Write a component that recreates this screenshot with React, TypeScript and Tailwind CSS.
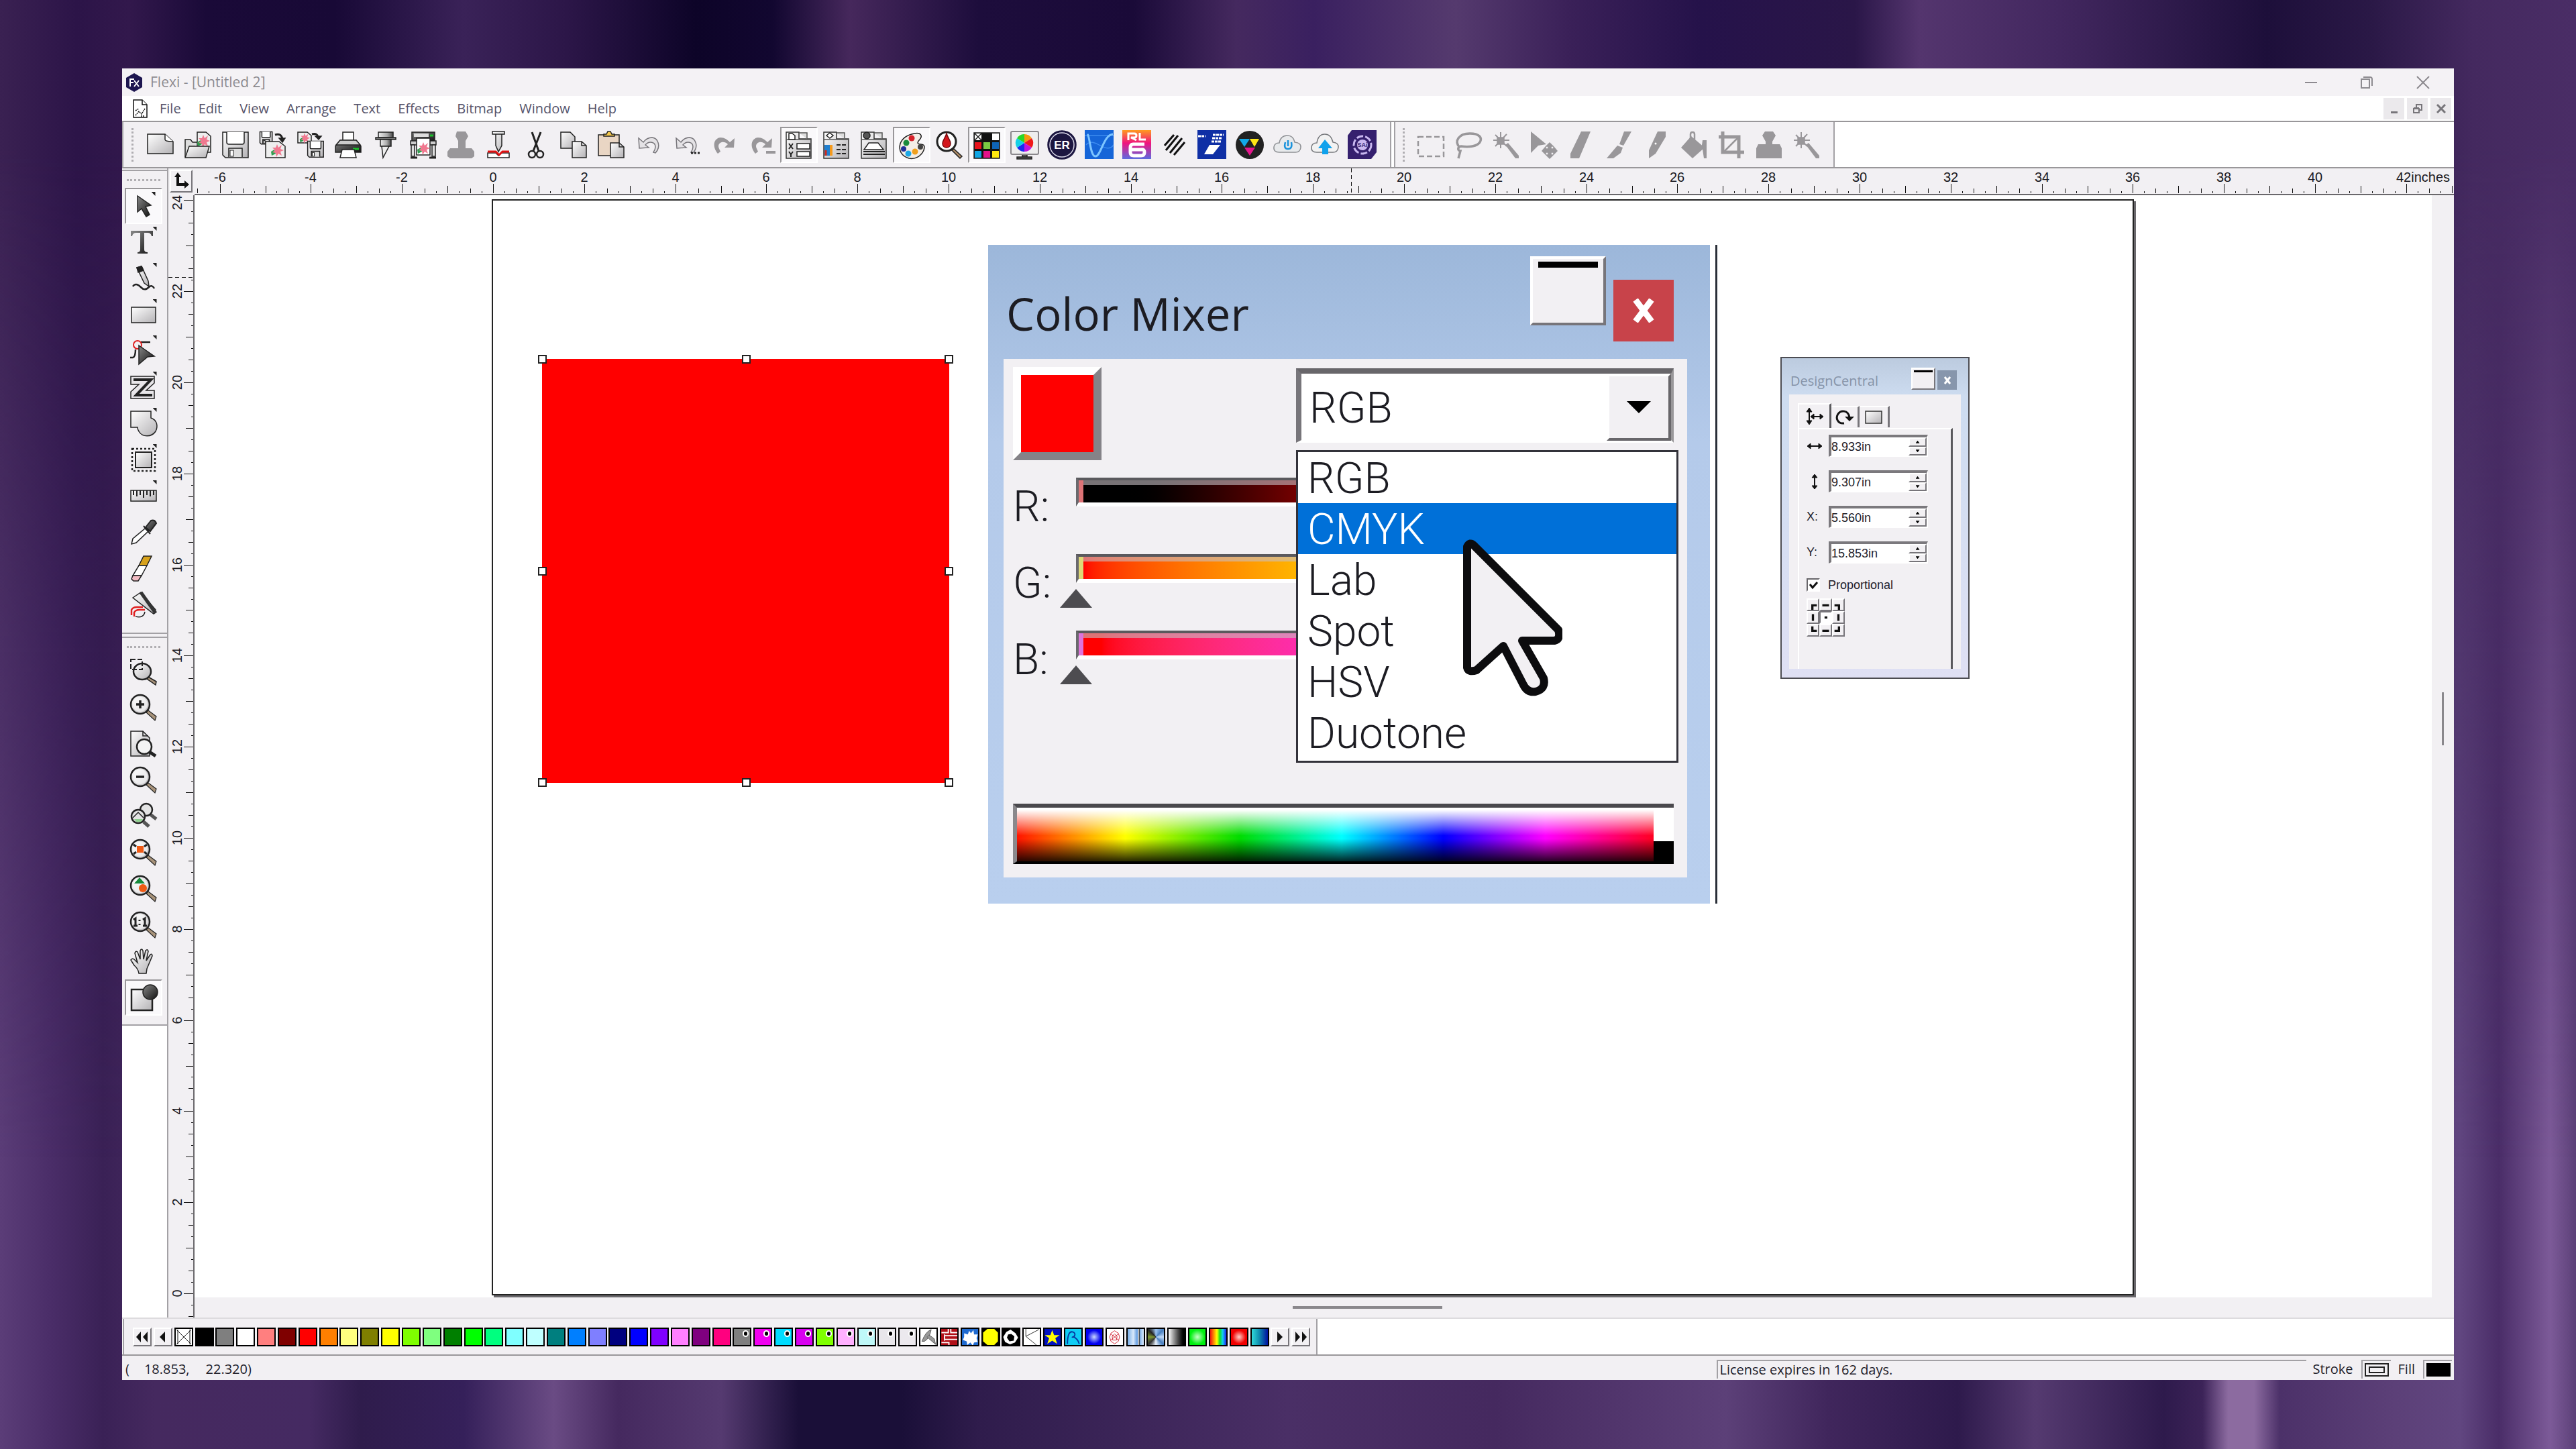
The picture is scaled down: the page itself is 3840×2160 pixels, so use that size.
import React, { useState } from "react";
import clsx from "clsx";

interface Tool {
  name: string;
  icon: React.ReactNode;
  pressed?: boolean;
  flyout?: boolean;
}

const INCH = 68;
const ORIGIN_X = 445;
const ORIGIN_Y = 1637;

const raised =
  "border-2 border-t-white border-l-white border-r-[#77757a] border-b-[#77757a] bg-[#f2f0f3]";
const sunken =
  "border-t-4 border-l-4 border-r-2 border-b-2 border-t-[#7b797d] border-l-[#7b797d] border-r-white border-b-white";

const Glyph: React.FC<{ children: React.ReactNode; className?: string }> = ({
  children,
  className = "size-10",
}) => (
  <svg
    viewBox="0 0 40 40"
    className={clsx("shrink-0 overflow-visible", className)}
    fill="none"
    stroke="#222"
    strokeWidth="1.5"
    aria-hidden="true"
  >
    {children}
  </svg>
);

const Defs = () => (
  <svg className="absolute size-0" aria-hidden="true">
    <defs>
      <linearGradient id="metal" x1="0" y1="0" x2="1" y2="1">
        <stop offset="0" stopColor="#fff" />
        <stop offset="1" stopColor="#b4b2b5" />
      </linearGradient>
      <linearGradient id="dark" x1="0" y1="0" x2="1" y2="1">
        <stop offset="0" stopColor="#888" />
        <stop offset="1" stopColor="#111" />
      </linearGradient>
      <linearGradient id="bar" x1="0" y1="0" x2="1" y2="0">
        <stop offset="0" stopColor="#eee" />
        <stop offset="0.6" stopColor="#aaa" />
        <stop offset="1" stopColor="#444" />
      </linearGradient>
      <linearGradient id="sunset" x1="0" y1="0" x2="0" y2="1">
        <stop offset="0" stopColor="#ff9a1f" />
        <stop offset="0.45" stopColor="#f0127f" />
        <stop offset="1" stopColor="#5d6be0" />
      </linearGradient>
    </defs>
  </svg>
);

const Flower: React.FC<{ x: number; y: number; s?: number }> = ({ x, y, s = 1 }) => (
  <g transform={`translate(${x} ${y}) scale(${s})`} stroke="none">
    <path d="M-9 3l5-3 2 6-6 3z" fill="#2f9e4f" />
    <path
      d="M0-8l2 5 5-4-2 6 5 2-5 2 2 6-5-3-3 5-1-6-5-1 4-3-4-4 5 0z"
      fill="#f0788f"
    />
  </g>
);

const Floppy: React.FC<{ x: number; y: number; s: number }> = ({ x, y, s }) => (
  <g transform={`translate(${x} ${y}) scale(${s})`}>
    <path d="M1 1h38v38H5l-4-4z" fill="url(#metal)" strokeWidth={1.5 / s} />
    <path d="M7 1v15q0 3 3 3h20q3 0 3-3V1" fill="#fff" strokeWidth={1.5 / s} />
    <path d="M10 38V25h20v13" fill="#ddd" strokeWidth={1.5 / s} />
    <rect x="12" y="28" width="5" height="9" fill="#fff" strokeWidth={1 / s} />
  </g>
);

const wand = (
  <g fill="#99979a" stroke="#99979a">
    <path d="M19 20l4-3 16 19v4h-5z" stroke="none" />
    <path d="M12 1v24M1 13h24M4 5l17 17M21 4L4 22" strokeWidth="2" />
    <path d="M7 9h10v10H7z" />
  </g>
);

const undo = (
  <path
    d="M5 10l1 15 14-1-5-4c6-7 15-4 15 3 0 3-1 5-3 8l3 1c9-10 4-22-5-23-6 0-10 3-13 7z"
    fill="#e4e2e5"
    stroke="#77757a"
  />
);

const redo = (
  <path
    d="M36 10l-1 14H21l5-5c-6-6-14-3-14 3 0 3 2 5 3 8l-4 3C2 22 5 10 15 9c6 0 10 3 14 7z"
    fill="#99979a"
    stroke="none"
  />
);

const panelBack = (
  <>
    <path d="M1 1h19v10h18v29H1z" fill="url(#metal)" stroke="#333" />
    <path d="M20 2h12v9" fill="#ddd" stroke="#555" />
    <path d="M1 12h37" stroke="#555" />
  </>
);

const fileTools: Tool[] = [
  {
    name: "New",
    icon: (
      <Glyph>
        <path d="M1 4h26l12 11v18H1z" fill="url(#metal)" />
        <path d="M27 4v8q0 3 12 3" fill="#fff" />
      </Glyph>
    ),
  },
  {
    name: "Open",
    icon: (
      <Glyph>
        <path d="M1 38V12h8l3 4h8" fill="#ddd" />
        <path d="M19 1h13l7 6v24H19z" fill="#eee" />
        <Flower x={28} y={13} />
        <path d="M1 39l6-17h30l-5 17z" fill="url(#metal)" />
      </Glyph>
    ),
  },
  { name: "Save", icon: <Glyph><Floppy x={0} y={0} s={1} /></Glyph> },
  {
    name: "Import",
    icon: (
      <Glyph>
        <Floppy x={0} y={0} s={0.48} />
        <path d="M9 15h20l9 7v17H9z" fill="#eee" />
        <Flower x={26} y={27} />
        <path d="M23 5q9-3 11 6" strokeWidth="3" />
        <path d="M29 10h9l-4 6z" fill="#222" />
      </Glyph>
    ),
  },
  {
    name: "Export",
    icon: (
      <Glyph>
        <path d="M1 1h14l6 5v11H1z" fill="#eee" />
        <Flower x={11} y={9} s={0.8} />
        <Floppy x={15} y={14} s={0.62} />
        <path d="M22 4q8-2 9 4" strokeWidth="3" />
        <path d="M27 7h9l-4 5z" fill="#222" />
      </Glyph>
    ),
  },
  {
    name: "Print",
    icon: (
      <Glyph>
        <path d="M12 14V1h16v13" fill="#fff" />
        <path d="M1 22l7-9h24l7 9v9H1z" fill="url(#dark)" />
        <path d="M2 20l6-7h24l6 7z" fill="#ccc" />
        <path d="M27 26h9" stroke="#19c22a" strokeWidth="3" />
        <path d="M11 27h18l3 12H8z" fill="#fff" />
      </Glyph>
    ),
  },
  {
    name: "Cut/Plot",
    icon: (
      <Glyph>
        <path d="M9 1h22v8H9z" fill="url(#bar)" />
        <path d="M5 9h30v3H5z" fill="#777" />
        <path d="M12 12h16v10H12z" fill="url(#bar)" />
        <path d="M14 22h11l-9 17z" fill="#eee" />
      </Glyph>
    ),
  },
  {
    name: "RIP and Print",
    icon: (
      <Glyph>
        <path d="M3 1h34v14H3z" fill="url(#dark)" />
        <path d="M6 3h22v5H6z" fill="#ddd" stroke="none" />
        <path d="M30 6h5" stroke="#19c22a" strokeWidth="3" />
        <path d="M1 14h38v6H1z" fill="#ccc" />
        <path d="M2 20h5v17H2zM33 20h5v17h-5z" fill="#ddd" />
        <path d="M10 10h20v25H10z" fill="#fff" />
        <Flower x={20} y={24} />
        <path d="M1 39h10M29 39h10" strokeWidth="3" />
      </Glyph>
    ),
  },
  {
    name: "Stamp",
    icon: (
      <Glyph>
        <path
          d="M14 0h13l4 7-4 7v11h9l4 5v7l-4 3H4l-4-3v-7l4-5h12V14l-4-7z"
          fill="#99979a"
          stroke="none"
        />
      </Glyph>
    ),
  },
  {
    name: "Cut contour",
    icon: (
      <Glyph>
        <path d="M11 0h18v4H11zM16 4h9v17l-5 9-4-9z" fill="url(#metal)" />
        <path d="M4 32v7h32v-7l-12 0-4 4-4-4z" fill="#fff" />
        <path d="M4 30h12l5 5 5-5h10" stroke="#e01010" strokeWidth="3" />
      </Glyph>
    ),
  },
  {
    name: "Cut",
    icon: (
      <Glyph>
        <path d="M14 1l10 28M27 1L16 29" strokeWidth="3" />
        <ellipse cx="14" cy="34" rx="5" ry="5" strokeWidth="2.5" />
        <ellipse cx="26" cy="34" rx="5" ry="5" strokeWidth="2.5" />
      </Glyph>
    ),
  },
  {
    name: "Copy",
    icon: (
      <Glyph>
        <path d="M1 1h14l7 7v17H1z" fill="url(#metal)" />
        <path d="M18 15h14l7 6v18H18z" fill="url(#metal)" />
        <path d="M32 15v6h7" />
      </Glyph>
    ),
  },
  {
    name: "Paste",
    icon: (
      <Glyph>
        <path d="M1 5h31v31H1z" fill="#e9d6c4" />
        <path d="M9 7V4h4l2-4h4l2 4h4v3z" fill="#f5c84c" />
        <path d="M19 17h13l7 6v16H19z" fill="url(#metal)" />
        <path d="M32 17v6h7" />
      </Glyph>
    ),
  },
  { name: "Undo", icon: <Glyph>{undo}</Glyph> },
  {
    name: "Undo list",
    icon: (
      <Glyph>
        {undo}
        <path d="M27 32h14" strokeWidth="3" strokeDasharray="3 2" />
      </Glyph>
    ),
  },
  { name: "Redo", icon: <Glyph>{redo}</Glyph> },
  {
    name: "Redo list",
    icon: (
      <Glyph>
        {redo}
        <path d="M27 31h14" stroke="#99979a" strokeWidth="4" />
      </Glyph>
    ),
  },
  {
    name: "DesignCentral",
    pressed: true,
    icon: (
      <Glyph>
        {panelBack}
        <path d="M5 3h5l4 3v6H5zM17 18h19v8H17zM17 30h19v7H17z" fill="#fff" />
        <path d="M5 18l6 8M11 18l-6 8M5 30l3 4 3-4M8 34v4" strokeWidth="2" />
      </Glyph>
    ),
  },
  {
    name: "DesignEditor",
    icon: (
      <Glyph>
        {panelBack}
        <path d="M5 6l5-4 5 4-5 4z" fill="#fff" />
        <path d="M4 36V20M8 36V20" stroke="#1f7fd0" strokeWidth="4" />
        <path d="M12 36V20" stroke="#f59a1c" strokeWidth="4" />
        <path d="M4 36V28" stroke="#d02a1c" strokeWidth="3" />
        <path d="M20 20h16M20 27h16M20 33h16" strokeWidth="2" strokeDasharray="6 2" />
      </Glyph>
    ),
  },
  {
    name: "Layers",
    icon: (
      <Glyph>
        {panelBack}
        <circle cx="9" cy="6" r="5" fill="#555" />
        <path d="M12 17h14l8 10H5z" fill="#fff" />
        <path d="M4 30h32M4 34h32" strokeWidth="2" />
      </Glyph>
    ),
  },
  {
    name: "Fill/Stroke Editor",
    pressed: true,
    icon: (
      <Glyph>
        <path
          d="M24 3c9-2 13 3 8 9-4 4-4 7 1 7 6 0 7 3 5 9-4 9-13 14-22 12C5 37 0 28 3 18 6 10 14 5 24 3z"
          fill="#f3ede7"
        />
        <g stroke="none">
          <circle cx="20" cy="10" r="4.500" fill="#d6212a" />
          <circle cx="12" cy="17" r="4.500" fill="#1b8a3c" />
          <circle cx="8" cy="26" r="4" fill="#22309a" />
          <circle cx="15" cy="33" r="4.500" fill="#1ba7e6" />
          <circle cx="25" cy="30" r="4.500" fill="#f0a01e" />
          <circle cx="33" cy="23" r="4" fill="#444" />
        </g>
      </Glyph>
    ),
  },
  {
    name: "Find color",
    icon: (
      <Glyph>
        <path d="M27 26l12 11-3 3-12-12z" fill="#b08c66" />
        <circle cx="16" cy="15" r="14" fill="#fff" strokeWidth="3" />
        <path d="M16 3c2 7 6 10 6 15 0 8-12 8-12 0 0-5 4-8 6-15z" fill="#d3161c" stroke="#7a0a0e" />
      </Glyph>
    ),
  },
  {
    name: "Swatches",
    pressed: true,
    icon: (
      <Glyph>
        <path d="M1 2h38v38H1z" fill="#111" />
        <g stroke="none">
          <path d="M2 3h10v10H2zM28 3h10v10H28z" fill="#fff" />
          <path d="M2 16h10v10H2z" fill="#e8131c" />
          <path d="M15 16h10v10H15z" fill="#7ac943" />
          <path d="M28 16h10v10H28z" fill="#0f63b5" />
          <path d="M2 29h10v10H2z" fill="#0fa5e3" />
          <path d="M15 29h10v10H15z" fill="#e3128a" />
          <path d="M28 29h10v10H28z" fill="#ffe80f" />
        </g>
        <path d="M2 3l10 10M12 3L2 13" />
      </Glyph>
    ),
  },
  {
    name: "Color Mixer",
    icon: (
      <Glyph>
        <path d="M17 34h7v4h-7zM9 38h22v3H9z" fill="#555" />
        <rect x="0" y="0" width="41" height="34" rx="2" fill="#eee" stroke="#8a888c" strokeWidth="2" />
        <g stroke="none">
          <path d="M20 17L20 4A13 13 0 0 1 31 10z" fill="#f59a0c" />
          <path d="M20 17L31 10A13 13 0 0 1 31 24z" fill="#f01818" />
          <path d="M20 17L31 24A13 13 0 0 1 20 30z" fill="#c012e0" />
          <path d="M20 17L20 30A13 13 0 0 1 9 24z" fill="#1a2bf0" />
          <path d="M20 17L9 24A13 13 0 0 1 9 10z" fill="#14d0e6" />
          <path d="M20 17L9 10A13 13 0 0 1 20 4z" fill="#28d828" />
        </g>
      </Glyph>
    ),
  },
  {
    name: "EnRoute",
    icon: (
      <Glyph>
        <circle cx="20" cy="20" r="21" fill="#1c1640" stroke="#1c1640" />
        <circle cx="20" cy="20" r="18" stroke="#d8d6e6" />
        <text x="20" y="26" textAnchor="middle" fill="#fff" stroke="none" fontSize="17" fontWeight="700" fontFamily="Liberation Sans, sans-serif">
          ER
        </text>
      </Glyph>
    ),
  },
  {
    name: "Vectorize",
    icon: (
      <Glyph>
        <path d="M-2-2h43v43H-2z" fill="#1565d8" stroke="none" />
        <path d="M-2 6h43M0 20c12-14 30 16 41 0" stroke="#3d8cf0" />
        <path d="M2 4c4 4 4 33 12 33S26 5 40 4" stroke="#7cc4ff" strokeWidth="3" />
      </Glyph>
    ),
  },
  {
    name: "RIP Log",
    icon: (
      <Glyph>
        <path d="M-2-2h43v43H-2z" fill="url(#sunset)" stroke="none" />
        <path d="M7 13V3h9q3 0 3 3t-3 3h-5l8 4M24 2v10h9" stroke="#fff" strokeWidth="3" />
        <path d="M31 19H14q-4 0-4 5v7q0 5 5 5h11q5 0 5-5t-5-4H10" stroke="#fff" strokeWidth="5" />
      </Glyph>
    ),
  },
  {
    name: "Hatching",
    icon: (
      <Glyph>
        <path d="M5 21l14-16M7 28L25 6M13 32L31 10M19 35l16-19" strokeWidth="3" stroke="#111" />
      </Glyph>
    ),
  },
  {
    name: "Production",
    icon: (
      <Glyph>
        <path d="M-2-2h43v43H-2z" fill="#0f2fa5" stroke="none" />
        <path d="M-1 7h11M21 5h16M20 10h15M19 15h15" stroke="#fff" strokeWidth="3" strokeDasharray="4 1" />
        <path d="M16 20h16L21 34H8z" fill="#fff" stroke="none" />
      </Glyph>
    ),
  },
  {
    name: "CMYK test",
    icon: (
      <Glyph>
        <circle cx="20" cy="20" r="21" fill="#222" stroke="none" />
        <g stroke="none">
          <path d="M4 11h16l-8 12z" fill="#11a9e8" />
          <path d="M20 11h14l-7 12z" fill="#ffe615" />
          <path d="M12 24h16l-8 12z" fill="#e5168c" />
        </g>
      </Glyph>
    ),
  },
  {
    name: "Cloud status",
    icon: (
      <Glyph>
        <path
          d="M8 31q-9 0-8-8 1-6 8-6 2-11 12-11 9 0 11 10 10 1 9 8-1 7-8 7z"
          fill="#e8eaec"
          stroke="#8e9094"
        />
        <path d="M21 13v9M17 16q-3 10 4 10t5-10" stroke="#1a93dc" strokeWidth="2.500" />
      </Glyph>
    ),
  },
  {
    name: "Cloud upload",
    icon: (
      <Glyph>
        <path
          d="M8 31q-9 0-8-8 1-6 8-6 2-13 12-13 9 0 12 12 9 1 8 8-1 7-8 7z"
          fill="#f2f2f2"
          stroke="#77797d"
        />
        <path d="M20 12l11 13h-6v9h-9v-9h-6z" fill="#0fa1ec" stroke="none" />
      </Glyph>
    ),
  },
  {
    name: "SAi Connect",
    icon: (
      <Glyph>
        <path d="M4-2h37v33l-8 10H-2V6z" fill="#35206e" stroke="none" />
        <circle cx="20" cy="20" r="13" stroke="#c9b8f0" strokeWidth="3" strokeDasharray="10 3" />
        <circle cx="20" cy="20" r="8" fill="#c9b8f0" stroke="none" />
        <text x="20" y="23" textAnchor="middle" fill="#35206e" stroke="none" fontSize="9" fontWeight="700" fontFamily="Liberation Sans, sans-serif">
          SAi
        </text>
      </Glyph>
    ),
  },
];

const bitmapTools: Tool[] = [
  {
    name: "Marquee",
    icon: (
      <Glyph>
        <path d="M1 8h38v29H1z" stroke="#99979a" strokeWidth="2.500" strokeDasharray="8 4" />
      </Glyph>
    ),
  },
  {
    name: "Lasso",
    icon: (
      <Glyph>
        <path
          d="M7 24C-2 14 6 3 22 3c14 0 19 6 15 13-4 6-16 8-28 6-6 1-5 7-1 7l-3 11"
          stroke="#99979a"
          strokeWidth="3.500"
        />
      </Glyph>
    ),
  },
  { name: "Magic wand", icon: <Glyph>{wand}</Glyph> },
  {
    name: "Move selection",
    icon: (
      <Glyph>
        <path d="M1 0l23 19-12 2-11 11z" fill="#99979a" stroke="none" />
        <path
          d="M29 17l5 5h-3v4h4v-3l5 6-5 5v-3h-4v4h3l-5 5-5-5h3v-4h-4v3l-5-5 5-6v3h4v-4h-3z"
          fill="#99979a"
          stroke="#99979a"
        />
      </Glyph>
    ),
  },
  {
    name: "Line",
    icon: <Glyph><path d="M20 0h14L17 40H4v-7z" fill="#99979a" stroke="none" /></Glyph>,
  },
  {
    name: "Brush",
    icon: (
      <Glyph>
        <path d="M28 0h11L27 21l-6-2zM18 21l8 3-3 8-11 8H2z" fill="#99979a" stroke="none" />
      </Glyph>
    ),
  },
  {
    name: "Pencil",
    icon: (
      <Glyph>
        <path d="M22 0h12v8L19 33 9 40V28z" fill="#99979a" stroke="none" />
        <circle cx="19" cy="18" r="1.500" fill="#fff" stroke="none" />
      </Glyph>
    ),
  },
  {
    name: "Fill",
    icon: (
      <Glyph>
        <path d="M16 7l20 17-18 16L1 24zM33 13h6v27h-4l-3-20z" fill="#99979a" stroke="none" />
        <path d="M15 14V4q0-3 3-3t3 3v8" stroke="#99979a" strokeWidth="2.500" />
      </Glyph>
    ),
  },
  {
    name: "Crop",
    icon: (
      <Glyph>
        <path d="M7 0v31h32M1 8h30v32" stroke="#99979a" strokeWidth="5" />
        <path d="M9 30L30 9" stroke="#99979a" strokeWidth="2.500" />
      </Glyph>
    ),
  },
  {
    name: "Clone stamp",
    icon: (
      <Glyph>
        <path d="M14 0h12l4 6-5 9v4h11l3 6v15H1V25l3-6h11v-4l-5-9z" fill="#99979a" stroke="none" />
      </Glyph>
    ),
  },
  { name: "Retouch", icon: <Glyph>{wand}</Glyph> },
];

const magnifier = (
  <>
    <path d="M27 24l12 9-2 6-13-12z" fill="#a8937a" strokeWidth="1.200" />
    <circle cx="15" cy="15" r="14" fill="url(#metal)" strokeWidth="2.500" />
    <circle cx="15" cy="15" r="11" fill="#fff" stroke="none" opacity="0.6" />
  </>
);

const drawTools: Tool[] = [
  {
    name: "Select",
    pressed: true,
    flyout: true,
    icon: (
      <Glyph>
        <path d="M11 5l20 14-8 2 6 12-5 3-7-12-6 5z" fill="url(#dark)" />
      </Glyph>
    ),
  },
  {
    name: "Text",
    flyout: true,
    icon: (
      <Glyph>
        <path d="M1 3h33v8h-2q-1-5-6-5h-5v25q0 4 5 4v2H11v-2q4 0 4-4V6H9q-5 0-6 5H1z" fill="url(#dark)" stroke="none" />
      </Glyph>
    ),
  },
  {
    name: "Freehand",
    flyout: true,
    icon: (
      <Glyph>
        <path d="M10 4l7-2 10 22 1 8-7-5z" fill="url(#metal)" />
        <path d="M10 4l7-2 3 6-8 3z" fill="#222" />
        <path d="M4 32c4-6 9-2 13 2s8 2 11-1 6-2 8 2" strokeWidth="2.500" />
      </Glyph>
    ),
  },
  {
    name: "Rectangle",
    flyout: true,
    icon: <Glyph><path d="M2 9h36v23H2z" fill="url(#metal)" /></Glyph>,
  },
  {
    name: "Path edit",
    flyout: true,
    icon: (
      <Glyph>
        <path d="M0 30h4q4-1 4-12M16 7h14" strokeWidth="2.500" />
        <circle cx="11" cy="11" r="6" stroke="#e02020" strokeWidth="2" />
        <path d="M13 12l23 16-10 1-13 11z" fill="url(#dark)" />
      </Glyph>
    ),
  },
  {
    name: "Outline",
    flyout: true,
    icon: (
      <Glyph>
        <path d="M1 4h35v10L24 25h12v12H1V27l12-11H1z" fill="#e8e6e9" />
        <path d="M5 9h26L9 32h24" strokeWidth="4" />
      </Glyph>
    ),
  },
  {
    name: "Weld",
    flyout: true,
    icon: (
      <Glyph>
        <path d="M1 2h30v10c9 3 11 12 7 20-6 9-20 9-25 0-2-3-2-4-2-6H1z" fill="url(#metal)" />
      </Glyph>
    ),
  },
  {
    name: "Contour",
    flyout: true,
    icon: (
      <Glyph>
        <path d="M3 4h34v33H3z" strokeDasharray="3 3" strokeWidth="2.500" />
        <path d="M8 9h24v23H8z" fill="url(#metal)" strokeWidth="2" />
      </Glyph>
    ),
  },
  {
    name: "Measure",
    flyout: true,
    icon: (
      <Glyph>
        <path d="M1 12h38v16H1z" fill="url(#metal)" />
        <path d="M5 12v7M10 12v9M15 12v7M20 12v11M25 12v7M30 12v9M35 12v7" strokeWidth="2" />
      </Glyph>
    ),
  },
  {
    name: "Eyedropper",
    icon: (
      <Glyph>
        <path d="M2 38l2-8 18-15 5 4L9 36z" fill="#fff" />
        <path d="M20 11l10 12M23 13l8-10q6-2 8 4l-9 12z" fill="url(#dark)" strokeWidth="2" />
      </Glyph>
    ),
  },
  {
    name: "Eraser",
    icon: (
      <Glyph>
        <path d="M20 2h12l-7 14H13z" fill="#d8a21c" />
        <path d="M13 16h12l-8 15H4z" fill="#fff" />
        <path d="M4 31h13l-5 8H5l-3-3z" fill="#f3bcc4" />
      </Glyph>
    ),
  },
  {
    name: "Knife",
    icon: (
      <Glyph>
        <path d="M4 10l12-8 22 26-3 6z" fill="url(#metal)" />
        <path d="M16 2l22 31" strokeWidth="5" stroke="#333" />
        <path d="M2 36v-8q2-4 8-4h9M6 38v-6q2-4 8-4h8" stroke="#e02020" strokeWidth="2.500" />
        <path d="M8 38q12 3 14-7" />
      </Glyph>
    ),
  },
];

const zoomTools: Tool[] = [
  {
    name: "Zoom area",
    icon: (
      <Glyph>
        <path d="M27 28l12 7-1 5-13-9z" fill="#a8937a" />
        <ellipse cx="18" cy="20" rx="13" ry="12" fill="url(#metal)" strokeWidth="2.500" />
        <path d="M1 2h17v15H1z" strokeWidth="2" strokeDasharray="7 3" />
      </Glyph>
    ),
  },
  {
    name: "Zoom in",
    icon: <Glyph>{magnifier}<path d="M15 9v12M9 15h12" strokeWidth="3.500" /></Glyph>,
  },
  {
    name: "Zoom to page",
    icon: (
      <Glyph>
        <path d="M1 1h18l10 10v27H1z" fill="url(#metal)" />
        <path d="M19 1v7h8" />
        <path d="M29 32l9 6" strokeWidth="5" />
        <circle cx="21" cy="24" r="11" fill="#f4f4f4" strokeWidth="2.500" />
      </Glyph>
    ),
  },
  {
    name: "Zoom out",
    icon: <Glyph>{magnifier}<path d="M9 15h12" strokeWidth="3.500" /></Glyph>,
  },
  {
    name: "Zoom previous",
    icon: (
      <Glyph>
        <path d="M30 17l9 7M20 28l8 7" strokeWidth="5" stroke="#555" />
        <circle cx="24" cy="10" r="9" fill="#e4e4e4" strokeWidth="2.500" />
        <circle cx="12" cy="20" r="10" fill="#e4e4e4" strokeWidth="2.500" />
        <path d="M4 22l8-8 8 8" />
        <path d="M6 24h13l-3 4H9z" fill="#8fd08f" stroke="none" />
      </Glyph>
    ),
  },
  {
    name: "Zoom to selection",
    icon: (
      <Glyph>
        {magnifier}
        <path d="M10 10h10v10H10z" fill="#f05a14" stroke="none" />
        <path d="M5 8l4 3M25 8l-4 3M5 22l4-3M25 22l-4-3" strokeWidth="3" />
      </Glyph>
    ),
  },
  {
    name: "Zoom to objects",
    icon: (
      <Glyph>
        {magnifier}
        <path d="M14 3l8 9H6z" fill="#168a3a" stroke="none" />
        <circle cx="19" cy="19" r="6" fill="#f05a14" stroke="none" />
      </Glyph>
    ),
  },
  {
    name: "Actual size",
    icon: (
      <Glyph>
        {magnifier}
        <path d="M5 12l3-2v11M14 12v2M14 18v2M19 12l3-2v11M5 21h6M19 21h6" strokeWidth="3" />
      </Glyph>
    ),
  },
  {
    name: "Pan",
    icon: (
      <Glyph>
        <path
          d="M13 38q-1-7-7-12l-5-8q2-3 5-1l5 5L7 8q1-4 4-2l4 11V4q2-4 4 0l1 13 3-13q3-3 4 1l-3 14 6-9q3-2 3 2-5 12-8 19l-1 7z"
          fill="url(#metal)"
        />
      </Glyph>
    ),
  },
  {
    name: "Fill and stroke",
    pressed: true,
    icon: (
      <Glyph>
        <path d="M2 8h31v31H2z" fill="url(#metal)" strokeWidth="2.500" />
        <circle cx="30" cy="12" r="11" fill="url(#dark)" />
      </Glyph>
    ),
  },
];

const ToolButton: React.FC<{ tool: Tool }> = ({ tool }) => (
  <button
    type="button"
    aria-label={tool.name}
    className={clsx(
      "relative flex h-[54px] w-[56px] shrink-0 items-center justify-center",
      tool.pressed &&
        "border-2 border-t-[#99979a] border-l-[#99979a] border-r-white border-b-white bg-[#faf9fb]",
    )}
  >
    {tool.icon}
    {tool.flyout && (
      <span className="absolute top-1 right-2 size-[6px] bg-[#222] [clip-path:polygon(0_0,100%_0,100%_100%)]" />
    )}
  </button>
);

const menus = ["File", "Edit", "View", "Arrange", "Text", "Effects", "Bitmap", "Window", "Help"];

const quarterSteps = (from: number, to: number) =>
  Array.from({ length: (to - from) * 4 + 1 }, (_, i) => from + i / 4);

const tickLength = (v: number) => {
  if (v % 2 === 0) return 14;
  if (v % 1 === 0) return 11;
  if (v % 0.5 === 0) return 7;
  return 3;
};

const HorizontalRuler = () => (
  <svg className="block h-full w-full" aria-label="Horizontal ruler">
    {quarterSteps(-6.5, 43).map((v) => {
      const x = Math.round(ORIGIN_X + v * (INCH - 0.1));
      return (
        <g key={v}>
          <path d={`M${x}.5 37V${37 - tickLength(v)}`} stroke="#111" strokeWidth="1" />
          {v % 2 === 0 && (
            <text
              x={v === 42 ? x - 15 : x}
              y="20"
              textAnchor={v === 42 ? "start" : "middle"}
              fontSize="20"
              fill="#1a1a22"
            >
              {v === 42 ? "42inches" : v}
            </text>
          )}
        </g>
      );
    })}
    <path d="M1724.5 0V38" stroke="#111" strokeWidth="1" strokeDasharray="6 4" />
  </svg>
);

const VerticalRuler = () => (
  <svg className="block h-full w-full overflow-visible" aria-label="Vertical ruler">
    {quarterSteps(-0.5, 24).map((v) => {
      const y = Math.round(ORIGIN_Y - v * (INCH - 0.1));
      return (
        <g key={v}>
          <path d={`M37 ${y}.5H${37 - tickLength(v)}`} stroke="#111" strokeWidth="1" />
          {v % 2 === 0 && (
            <text
              transform={`translate(20 ${v === 24 ? y + 4 : y}) rotate(-90)`}
              textAnchor="middle"
              fontSize="20"
              fill="#1a1a22"
            >
              {v}
            </text>
          )}
        </g>
      );
    })}
    <path d="M0 122.5H38" stroke="#111" strokeWidth="1" strokeDasharray="6 4" />
  </svg>
);

const SelectedSquare = () => {
  const handles = [
    "-top-[6px] -left-[6px]",
    "-top-[6px] left-[calc(50%-6px)]",
    "-top-[6px] -right-[6px]",
    "top-[calc(50%-6px)] -left-[6px]",
    "top-[calc(50%-6px)] -right-[6px]",
    "-bottom-[6px] -left-[6px]",
    "-bottom-[6px] left-[calc(50%-6px)]",
    "-bottom-[6px] -right-[6px]",
  ];
  return (
    <div className="absolute top-[244px] left-[518px] h-[632px] w-[607px] bg-[#ff0000]">
      {handles.map((place) => (
        <span key={place} className={clsx("absolute size-[13px] border-2 border-[#222] bg-white", place)} />
      ))}
    </div>
  );
};

const ColorSlider: React.FC<{
  id: string;
  label: string;
  track: string;
  value: number;
  onChange: (v: number) => void;
}> = ({ id, label, track, value, onChange }) => (
  <div className="flex h-[114px]">
    <label htmlFor={id} className="w-[94px] text-[64px] leading-[88px] font-light">
      {label}
    </label>
    <div className="w-[540px]">
      <div className="h-[43px] border-t-4 border-b-[6px] border-l-4 border-t-[#5a595d] border-b-white border-l-[#6a696d]">
        <div className={clsx("h-full border-t-[7px] border-l-[7px] border-[#c8c0c4]/60", track)} />
      </div>
      <input
        id={id}
        type="range"
        min={0}
        max={255}
        value={value}
        onChange={(e) => onChange(Number(e.target.value))}
        className="-ml-6 mt-[9px] block h-7 w-[588px] appearance-none bg-transparent [&::-webkit-slider-thumb]:h-7 [&::-webkit-slider-thumb]:w-12 [&::-webkit-slider-thumb]:appearance-none [&::-webkit-slider-thumb]:bg-[#4d4c50] [&::-webkit-slider-thumb]:[clip-path:polygon(50%_0,100%_100%,0_100%)]"
      />
    </div>
  </div>
);

const colorModes = ["RGB", "CMYK", "Lab", "Spot", "HSV", "Duotone"];

const ColorMixer = () => {
  const [mode, setMode] = useState("RGB");
  const [hovered, setHovered] = useState("CMYK");
  const [rgb, setRgb] = useState({ r: 255, g: 0, b: 0 });

  return (
    <section className="absolute top-[74px] left-[1183px] h-[982px] w-[1087px] border-r-[3px] border-[#2a2f38] bg-white pr-2 font-[Roboto,sans-serif] text-[#1c1c22]">
      <div className="flex h-full flex-col bg-linear-to-b from-[#9cb7da] via-[#b4caea] via-30% to-[#b9cfee] pr-[34px] pl-[23px]">
        <header className="flex h-[170px] shrink-0 items-start pr-[20px]">
          <h2 className="mt-[58px] ml-1 font-['Open_Sans',sans-serif] text-[67px] leading-[88px] whitespace-nowrap">
            Color Mixer
          </h2>
          <button
            type="button"
            aria-label="Roll up"
            className="mt-[17px] ml-auto flex h-[103px] w-[113px] items-start border-4 border-t-white border-l-white border-r-[#77757a] border-b-[#77757a] bg-[#f2f0f3] px-2 pt-1"
          >
            <span className="h-[9px] w-full bg-black" />
          </button>
          <button
            type="button"
            aria-label="Close"
            className="mt-[52px] ml-[11px] flex h-[92px] w-[90px] items-center justify-center bg-[#c8434a]"
          >
            <svg viewBox="0 0 32 36" className="h-9 w-8" fill="none" stroke="#fff" strokeWidth="9">
              <path d="M4 2l24 32M28 2L4 34" />
            </svg>
          </button>
        </header>

        <div className="flex h-[773px] shrink-0 flex-col bg-[#f2f0f3] py-3 pr-[20px] pl-[14px]">
          <div className="flex items-start justify-between">
            <div className="h-[139px] w-[132px] border-[12px] border-t-white border-r-[#858388] border-b-[#858388] border-l-white bg-[#ff0000]" />
            <div className="relative mt-[2px] w-[563px]">
              <select
                aria-label="Color model"
                value={mode}
                onChange={(e) => setMode(e.target.value)}
                className="block h-[111px] w-full appearance-none border-t-8 border-r-4 border-b-4 border-l-8 border-t-[#68666a] border-r-[#99979a] border-b-white border-l-[#77757a] bg-white pt-1 pl-3 text-[64px] leading-[88px] font-light"
              >
                {colorModes.map((m) => (
                  <option key={m}>{m}</option>
                ))}
              </select>
              <span className="pointer-events-none absolute top-2 right-1 flex h-[100px] w-[96px] items-center justify-center border-4 border-t-white border-r-[#68666a] border-b-[#68666a] border-l-white bg-[#f2f0f3]">
                <span className="h-[18px] w-9 bg-black [clip-path:polygon(0_0,100%_0,50%_100%)]" />
              </span>
              <ul
                role="listbox"
                aria-label="Color models"
                className="absolute top-[122px] left-0 z-10 w-[570px] border-[3px] border-[#33323a] bg-white pb-1"
              >
                {colorModes.map((m) => (
                  <li
                    key={m}
                    role="option"
                    aria-selected={m === hovered}
                    onMouseEnter={() => setHovered(m)}
                    onClick={() => setMode(m)}
                    className={clsx(
                      "h-[76px] pl-[14px] text-[64px] leading-[80px] font-light",
                      m === hovered && "bg-[#0070d8] text-white",
                    )}
                  >
                    {m}
                  </li>
                ))}
              </ul>
            </div>
          </div>

          <div className="mt-[26px]">
            <ColorSlider
              id="mix-r"
              label="R:"
              track="bg-linear-to-r from-black from-10% to-[#ff0000]"
              value={rgb.r}
              onChange={(r) => setRgb({ ...rgb, r })}
            />
            <ColorSlider
              id="mix-g"
              label="G:"
              track="bg-linear-to-r from-[#ff0000] to-[#ffff00]"
              value={rgb.g}
              onChange={(g) => setRgb({ ...rgb, g })}
            />
            <ColorSlider
              id="mix-b"
              label="B:"
              track="bg-linear-to-r from-[#ff0000] from-5% to-[#ff00ff]"
              value={rgb.b}
              onChange={(b) => setRgb({ ...rgb, b })}
            />
          </div>

          <div className="mt-auto mb-2 flex h-[90px] border-t-[6px] border-b-4 border-l-[6px] border-t-[#4a494d] border-b-black border-l-[#8a888c] bg-white">
            <div className="flex-1 bg-[linear-gradient(180deg,#fff_4%,#ffffff00_52%,#00000000_58%,#000000d8_100%),linear-gradient(90deg,#ff1400,#ffff00_17%,#00dc00_35%,#00ffff_51%,#0000ff_67%,#ff00ff_83%,#ff0020)]" />
            <div className="mt-auto h-[30px] w-[30px] bg-black" />
          </div>
        </div>
      </div>

      <svg
        viewBox="0 0 150 236"
        className="absolute top-[438px] left-[706px] z-20 h-[236px] w-[150px]"
        fill="#f2f0f3"
        stroke="#0c0c0e"
        strokeWidth="12"
        strokeLinejoin="round"
        aria-hidden="true"
      >
        <path d="M8 12q4-8 10-2l126 126q4 14-6 16h-48l32 56q4 16-12 20-12 2-18-10l-30-58-40 36q-12 4-14-4z" />
      </svg>
    </section>
  );
};

const SpinField: React.FC<{ id: string; label: React.ReactNode; name: string; initial: string }> = ({
  id,
  label,
  name,
  initial,
}) => {
  const [value, setValue] = useState(initial);
  return (
    <div className="flex h-[33px] items-center">
      <label htmlFor={id} aria-label={name} className="flex w-[30px] shrink-0">
        {label}
      </label>
      <div className={clsx("ml-[3px] flex h-full w-[148px] bg-white", sunken)}>
        <input
          id={id}
          value={value}
          onChange={(e) => setValue(e.target.value)}
          className="w-0 flex-1 bg-transparent text-[18px] leading-5 outline-none"
        />
        <div className="flex w-[27px] flex-col">
          <button type="button" aria-label={`Increase ${name}`} className={clsx("flex flex-1 items-center justify-center", raised)}>
            <span className="h-1 w-[6px] bg-black [clip-path:polygon(50%_0,100%_100%,0_100%)]" />
          </button>
          <button type="button" aria-label={`Decrease ${name}`} className={clsx("flex flex-1 items-center justify-center", raised)}>
            <span className="h-1 w-[6px] bg-black [clip-path:polygon(0_0,100%_0,50%_100%)]" />
          </button>
        </div>
      </div>
    </div>
  );
};

const anchors = [
  "M8 18V10H16", "M3 10H15", "M2 10H10V18",
  "M9 3V15", "M7 9H12", "M9 3V15",
  "M8 2V10H16", "M3 10H15", "M2 10H10V2",
];

const DesignCentral = () => {
  const [proportional, setProportional] = useState(true);
  const [anchor, setAnchor] = useState(4);

  return (
    <section className="absolute top-[241px] left-[2364px] flex h-[480px] w-[282px] flex-col border-2 border-[#4c4c52] bg-linear-to-b from-[#bccbdf] via-[#cddcf0] via-12% to-[#dfe0f4] px-[11px] text-[18px] text-[#23222c]">
      <header className="flex h-[54px] shrink-0 items-start pr-[6px]">
        <h2 className="mt-5 ml-[2px] font-['Open_Sans',sans-serif] text-[20px] leading-7 text-[#8593a8]">
          DesignCentral
        </h2>
        <button type="button" aria-label="Roll up" className={clsx("mt-[14px] ml-auto flex h-[33px] w-[36px] items-start p-[2px]", raised)}>
          <span className="h-[3px] w-full bg-black" />
        </button>
        <button type="button" aria-label="Close" className="mt-[18px] ml-[3px] flex h-[29px] w-[29px] items-center justify-center bg-[#8796ac]">
          <svg viewBox="0 0 10 12" className="h-3 w-[10px]" fill="none" stroke="#fff" strokeWidth="3">
            <path d="M1 1l8 10M9 1L1 11" />
          </svg>
        </button>
      </header>

      <div className="flex h-[409px] flex-col bg-[#f2f0f3] pt-[13px] pr-3 pl-[13px]">
        <div className="flex">
          <button type="button" aria-label="Size" className="flex h-[37px] w-[50px] items-center justify-center border-t-2 border-r-[3px] border-l-2 border-t-white border-r-[#5a595d] border-l-white">
            <svg viewBox="0 0 30 28" className="h-7 w-[30px]" fill="#111" stroke="#111" strokeWidth="2">
              <path d="M7 5v18M10 14h16" />
              <path d="M3 7l4-6 4 6zM3 20l4 6 4-6zM14 10l-5 4 5 4zM23 10l5 4-5 4z" strokeWidth="1" />
            </svg>
          </button>
          <button type="button" aria-label="Rotation" className="mt-1 flex h-[32px] w-[42px] items-center justify-center border-t-2 border-r-[3px] border-t-white border-r-[#77757a]">
            <svg viewBox="0 0 30 24" className="h-6 w-[30px]" fill="none" stroke="#111" strokeWidth="3">
              <path d="M14 21C4 22 1 13 5 7s15-6 17 5" />
              <path d="M15 11h14l-7 7z" fill="#111" stroke="none" />
            </svg>
          </button>
          <button type="button" aria-label="Rectangle" className="mt-1 flex h-[32px] w-[45px] items-center justify-center border-t-2 border-r-[3px] border-t-white border-r-[#77757a]">
            <svg viewBox="0 0 26 20" className="h-5 w-[26px]" fill="url(#metal)" stroke="#333" strokeWidth="1.500">
              <path d="M1 1h24v18H1z" />
            </svg>
          </button>
        </div>
        <div className="flex flex-1 flex-col border-t-2 border-r-[3px] border-l-2 border-t-white border-r-[#5a595d] border-l-white pt-2 pl-[11px]">
          <div className="flex flex-col gap-5">
            <SpinField
              id="dc-width"
              name="Width"
              initial="8.933in"
              label={
                <svg viewBox="0 0 24 12" className="h-3 w-6" fill="#111" stroke="#111" strokeWidth="2">
                  <path d="M4 6h16" />
                  <path d="M6 2L1 6l5 4zM18 2l5 4-5 4z" strokeWidth="1" />
                </svg>
              }
            />
            <SpinField
              id="dc-height"
              name="Height"
              initial="9.307in"
              label={
                <svg viewBox="0 0 24 24" className="size-6" fill="#111" stroke="#111" strokeWidth="2">
                  <path d="M12 4v16" />
                  <path d="M8 6l4-5 4 5zM8 18l4 5 4-5z" strokeWidth="1" />
                </svg>
              }
            />
            <SpinField id="dc-x" name="X position" initial="5.560in" label="X:" />
            <SpinField id="dc-y" name="Y position" initial="15.853in" label="Y:" />
          </div>
          <label className="mt-5 flex h-6 items-center gap-3 leading-6">
            <span className="relative flex size-5">
              <input
                type="checkbox"
                checked={proportional}
                onChange={(e) => setProportional(e.target.checked)}
                className="size-5 appearance-none border-2 border-t-[#68666a] border-l-[#68666a] border-r-white border-b-white bg-white"
              />
              {proportional && (
                <svg viewBox="0 0 20 20" className="pointer-events-none absolute inset-0 size-5" fill="none" stroke="#111" strokeWidth="3">
                  <path d="M5 9l4 5 7-8" />
                </svg>
              )}
            </span>
            Proportional
          </label>
          <div className="mt-2 grid w-[57px] grid-cols-3">
            {anchors.map((d, i) => (
              <button
                key={i}
                type="button"
                aria-label={`Anchor ${i + 1}`}
                onClick={() => setAnchor(i)}
                className={clsx("size-[19px] border-2", i === anchor ? "border-t-[#77757a] border-l-[#77757a] border-r-white border-b-white bg-white" : raised)}
              >
                <svg viewBox="0 0 18 18" className="size-[15px]" fill="none" stroke="#111" strokeWidth="4">
                  <path d={d} />
                </svg>
              </button>
            ))}
          </div>
        </div>
      </div>
    </section>
  );
};

const solidSwatches = [
  "bg-black", "bg-[#7f7f7f]", "bg-white", "bg-[#ff7f7f]", "bg-[#7f0000]", "bg-[#ff0000]",
  "bg-[#ff7f00]", "bg-[#ffff7f]", "bg-[#7f7f00]", "bg-[#ffff00]", "bg-[#7fff00]", "bg-[#7fff7f]",
  "bg-[#007f00]", "bg-[#00ff00]", "bg-[#00ff7f]", "bg-[#7fffff]", "bg-[#bfffff]", "bg-[#007f7f]",
  "bg-[#007fff]", "bg-[#7f7fff]", "bg-[#00007f]", "bg-[#0000ff]", "bg-[#7f00ff]", "bg-[#ff7fff]",
  "bg-[#7f007f]", "bg-[#ff007f]",
];

const spotSwatches = [
  "bg-[#7f7f7f]", "bg-[#f000f0]", "bg-[#00dcff]", "bg-[#d800f0]", "bg-[#7fff00]",
  "bg-[#ffb0ff]", "bg-[#bff8f8]", "bg-[#e8e6ea]", "bg-[#ece9ee]",
];

const patternSwatches: { bg: string; art?: React.ReactNode }[] = [
  { bg: "bg-white", art: <path d="M2 20Q8 4 17 1 14 16 6 20zM10 13l14 12-2-9-8-6z" fill="#999" stroke="#555" /> },
  { bg: "bg-[#b01018]", art: <path d="M0 6h11v-6M15 0v6h11M5 11h21M5 17h21M0 22h12v6M5 9v10" stroke="#fff" strokeWidth="2" /> },
  { bg: "bg-[#1f6ad0]", art: <path d="M3 7l6 2 2-6 3 4 4-5 1 7 6 0-2 6 2 6-6 1-2 5-4-5-5 4-1-6-6-2 2-5z" fill="#fff" stroke="none" /> },
  { bg: "bg-black", art: <path d="M7 0h11l6 6v14l-6 6H7l-7-6V6z" fill="#ff0" stroke="none" /> },
  { bg: "bg-black", art: <path d="M12 1l8 6 4 7-5 8-8 3-8-4-3-8 5-8zM8 9l-2 5 4 6 7-1 1-7-5-4z" fill="#fff" fillRule="evenodd" stroke="none" /> },
  { bg: "bg-white", art: <path d="M24 1L3 12l17 14M3 12V0" stroke="#222" /> },
  { bg: "bg-[#0010c0]", art: <path d="M12 2l3 8h9l-7 5 3 9-8-5-8 5 3-9-7-5h9z" fill="#ff0" stroke="none" /> },
  { bg: "bg-[#10cdf5]", art: <path d="M3 24C3 10 6 3 12 5s2 10-2 8M12 12q8 4 10 12" stroke="#0838a0" strokeWidth="2" /> },
  { bg: "bg-[radial-gradient(circle,#c8d8ff,#0000f0_60%)]" },
  { bg: "bg-white", art: <path d="M12 3l6 4 2 6-2 7-6 4-6-4-2-7 2-6zM12 8l4 4-1 6h-6l-1-6zM6 8l12 10M18 8L6 18" stroke="#d02030" /> },
  { bg: "bg-[linear-gradient(90deg,#7ab0e8,#d8e8fb_35%,#5f9ae0_60%,#fff_66%,#333_72%,#8ab8ec_78%,#dcebfc)]" },
  { bg: "bg-[conic-gradient(#9cc4f2,#4a80c0,#c4dcf8,#4a80c0,#e8f2fd,#333,#7f9a30,#222,#9cc4f2)]" },
  { bg: "bg-linear-to-r from-white to-black" },
  { bg: "bg-[radial-gradient(circle,#c8ffc8,#00f010_65%)]" },
  { bg: "bg-[linear-gradient(90deg,#f01010,#ff9a00_25%,#ffff00_42%,#10e020_60%,#10d0f0_78%,#2020f0)]" },
  { bg: "bg-[radial-gradient(circle,#ffd0c8,#f00000_60%)]" },
  { bg: "bg-[linear-gradient(90deg,#30d8d8,#1090b0_45%,#0010a0)]" },
];

const swatchBase = "h-[28px] w-[28px] shrink-0 border-2 border-black";

const PaletteArrow: React.FC<{ name: string; d: string }> = ({ name, d }) => (
  <button type="button" aria-label={name} className={clsx("flex size-[28px] shrink-0 items-center justify-center", raised)}>
    <svg viewBox="0 0 24 24" className="size-6 shrink-0" fill="#111">
      <path d={d} />
    </svg>
  </button>
);

const Palette = () => (
  <div className="flex h-[53px] w-[1781px] items-center justify-between border-r-2 border-l-2 border-[#a3a1a5] bg-[#f2f0f3] pr-[8px] pl-[13px]">
    <PaletteArrow name="First colors" d="M10 4v16L3 12zM20 4v16l-7-8z" />
    <PaletteArrow name="Previous colors" d="M15 4v16L7 12z" />
    <button type="button" aria-label="No color" className={clsx(swatchBase, "bg-white")}>
      <svg viewBox="0 0 24 24" className="size-6" stroke="#111" strokeWidth="1">
        <path d="M1 1l22 22M23 1L1 23M3 1v22M21 1v22" />
      </svg>
    </button>
    {solidSwatches.map((color) => (
      <button key={color} type="button" aria-label={color.slice(3)} className={clsx(swatchBase, color)} />
    ))}
    {spotSwatches.map((color) => (
      <button key={color} type="button" aria-label={`Spot ${color.slice(3)}`} className={clsx(swatchBase, "flex items-start justify-end p-[2px]", color)}>
        <span className="h-[10px] w-[9px] rounded-full border-2 border-white bg-black" />
      </button>
    ))}
    {patternSwatches.map((swatch, i) => (
      <button key={i} type="button" aria-label={`Pattern ${i + 1}`} className={clsx(swatchBase, swatch.bg)}>
        {swatch.art && (
          <svg viewBox="0 0 25 26" className="size-6" fill="none" aria-hidden="true">
            {swatch.art}
          </svg>
        )}
      </button>
    ))}
    <PaletteArrow name="Next colors" d="M8 4v16l8-8z" />
    <PaletteArrow name="Last colors" d="M4 4v16l7-8zM14 4v16l7-8z" />
  </div>
);

const VerticalGrip = () => (
  <span className="h-[50px] shrink-0 border-l-[3px] border-dotted border-[#b0aeb2]" />
);

export default function App() {
  return (
    <div className="relative isolate flex min-h-screen flex-col overflow-hidden px-[182px] pt-[102px] pb-[103px] font-['Liberation_Sans',Arial,sans-serif] text-[20px] text-[#23222c]">
      <Defs />
      <div className="absolute inset-0 -z-20 bg-[linear-gradient(90deg,#5b3d78,#4a2d68_2%,#3a2156_4%,#45295f_6%,#452a62_12%,#2f1c4c_14%,#35205a_18%,#6a4b84_21.500%,#45295f_24%,#553a70_28%,#1a0f38_31%,#1a0f38_35%,#2f1c4c_38%,#4a2f66_50%,#45295f_58%,#5c4078_67%,#40265c_71%,#2e1a4c_76%,#553a70_79%,#2e1a4c_84%,#3c2358_85.500%,#8c6ba0_86.500%,#8c6ba0_87.500%,#4c3169_88.500%,#5c4078_93%,#614680_95.500%,#4a2d68_97%,#7c5a98_99%,#5c4078)]" />
      <div className="absolute inset-0 -z-10 bg-[linear-gradient(90deg,#3a2152,#2c1448_3%,#32184c_5%,#1a0a38_8%,#180936_13%,#3a2258_18%,#2c1648_22%,#0d0428_27%,#120730_30%,#46285c_33%,#1d0d3c_38%,#1a0a38_44%,#45295f_48%,#3a2060_51%,#553a6e_56.500%,#3a2058_61%,#25124a_66%,#2a1648_72%,#54356e_74.500%,#42275f_80%,#1d0f3a_88%,#2a1846_92%,#44295f_96%,#4a2d66)] [mask-image:linear-gradient(180deg,#000_10%,#0000_80%)]" />

      <div className="flex flex-1 flex-col bg-white">
        <header className="flex h-[41px] items-center bg-[#f4f2f5] pl-[5px] font-['Open_Sans',sans-serif] text-[#8d8b90]">
          <svg viewBox="0 0 26 28" className="h-7 w-[26px]" aria-hidden="true">
            <path d="M13 0l12 7v14l-12 7L1 21V7z" fill="#1d1650" />
            <path d="M7 20V9h6M7 14h5M13 11l7 9M20 11l-7 9" fill="none" stroke="#fff" strokeWidth="2" />
          </svg>
          <h1 className="ml-[11px] text-[21px]">Flexi - [Untitled 2]</h1>
          <div className="ml-auto flex items-center gap-[64px] pr-[36px]">
            <button type="button" aria-label="Minimize" className="h-[2px] w-[18px] bg-[#8d8b90]" />
            <button type="button" aria-label="Restore">
              <svg viewBox="0 0 20 20" className="size-5" fill="none" stroke="#8d8b90" strokeWidth="2">
                <path d="M2 5h12v13H2zM5 2h10q3 0 3 3v10" />
              </svg>
            </button>
            <button type="button" aria-label="Close">
              <svg viewBox="0 0 20 20" className="size-5" fill="none" stroke="#8d8b90" strokeWidth="2">
                <path d="M1 1l18 18M19 1L1 19" />
              </svg>
            </button>
          </div>
        </header>

        <nav className="flex h-[37px] items-center pl-[16px] font-['Open_Sans',sans-serif] text-[#55536a]">
          <svg viewBox="0 0 22 28" className="mr-[18px] h-7 w-[22px]" fill="#fff" stroke="#111" strokeWidth="1.500" aria-hidden="true">
            <path d="M1 1h13l7 7v19H1z" />
            <path d="M14 1v7h7" />
            <path d="M4 24l5-6 4 4 5-8M4 17l5-3M12 25h6" strokeDasharray="2 1" />
          </svg>
          <div className="flex gap-[26px]">
            {menus.map((menu) => (
              <button key={menu} type="button">
                {menu}
              </button>
            ))}
          </div>
          <div className="ml-auto flex gap-1 pr-1">
            <button type="button" aria-label="Minimize document" className="flex h-8 w-[31px] items-center justify-center bg-[#ebe9ec]">
              <span className="mt-3 h-[3px] w-[10px] bg-[#77757a]" />
            </button>
            <button type="button" aria-label="Restore document" className="flex h-8 w-[31px] items-center justify-center bg-[#ebe9ec]">
              <svg viewBox="0 0 16 16" className="size-4" fill="none" stroke="#77757a" strokeWidth="2">
                <path d="M2 8h8v6H2zM2 7h8M6 6V2h8v8h-3" />
              </svg>
            </button>
            <button type="button" aria-label="Close document" className="flex h-8 w-[31px] items-center justify-center bg-[#ebe9ec]">
              <svg viewBox="0 0 14 14" className="size-[14px]" fill="none" stroke="#77757a" strokeWidth="3">
                <path d="M1 1l12 12M13 1L1 13" />
              </svg>
            </button>
          </div>
        </nav>

        <div className="flex h-[71px] border-t-2 border-b-2 border-[#99979a]">
          <div className="flex items-center border-l-2 border-r-2 border-[#a3a1a5] bg-[#f2f0f3] pr-[13px] pl-[12px]">
            <VerticalGrip />
            <div className="ml-[12px] flex">
              {fileTools.map((tool) => (
                <ToolButton key={tool.name} tool={tool} />
              ))}
            </div>
          </div>
          <div className="ml-1 flex items-center border-l-2 border-r-2 border-[#a3a1a5] bg-[#f2f0f3] pr-[12px] pl-[11px]">
            <VerticalGrip />
            <div className="ml-[11px] flex">
              {bitmapTools.map((tool) => (
                <ToolButton key={tool.name} tool={tool} />
              ))}
            </div>
          </div>
        </div>

        <div className="flex flex-1">
          <aside className="w-[69px] border-r-2 border-[#a3a1a5]">
            <div className="flex flex-col items-center bg-[#f2f0f3] pt-[2px]">
              <div className="flex h-[692px] w-full flex-col items-center border-t-2 border-b-2 border-[#a3a1a5] pr-1">
                <span className="mt-3 mb-[10px] w-[50px] border-t-[3px] border-dotted border-[#b0aeb2]" />
                {drawTools.map((tool) => (
                  <ToolButton key={tool.name} tool={tool} />
                ))}
              </div>
              <div className="mt-1 flex h-[580px] w-full flex-col items-center border-t-2 border-b-2 border-[#a3a1a5] pr-1">
                <span className="mt-3 mb-2 w-[50px] border-t-[3px] border-dotted border-[#b0aeb2]" />
                {zoomTools.map((tool) => (
                  <ToolButton key={tool.name} tool={tool} />
                ))}
              </div>
            </div>
          </aside>

          <div className="grid flex-1 grid-cols-[39px_1fr] grid-rows-[40px_1fr]">
            <div className="flex items-start bg-[#f2f0f3] p-[2px]">
              <button type="button" aria-label="Set origin" className={clsx("flex size-[34px] items-center justify-center", raised)}>
                <svg viewBox="0 0 26 28" className="h-7 w-[26px]" fill="#111" stroke="#111">
                  <path d="M8 6v13h12" fill="none" strokeWidth="4" />
                  <path d="M3 8l5-7 5 7zM18 13v12l7-6z" stroke="none" />
                </svg>
              </button>
            </div>
            <div className="border-b-2 border-[#6a686c] bg-[#f2f0f3]">
              <HorizontalRuler />
            </div>
            <div className="border-r-2 border-[#6a686c] bg-[#f2f0f3]">
              <VerticalRuler />
            </div>
            <div className="grid grid-cols-[1fr_33px] grid-rows-[1fr_30px] bg-[#f2f0f3]">
              <main className="relative overflow-hidden bg-white">
                <div className="absolute top-[6px] left-[443px] h-[1634px] w-[2448px] border-2 border-[#222] bg-white shadow-[3px_3px_0_#6a686c]" />
                <SelectedSquare />
                <ColorMixer />
                <DesignCentral />
              </main>
              <div className="flex items-center justify-center">
                <span className="mb-[82px] h-[79px] w-[3px] bg-[#8a888c]" />
              </div>
              <div className="flex items-center justify-center">
                <span className="ml-[162px] h-[4px] w-[223px] bg-[#8a888c]" />
              </div>
            </div>
          </div>
        </div>

        <div className="border-t-2 border-[#dddbde] pl-[1px]">
          <Palette />
        </div>

        <footer className="flex h-[38px] items-center border-t-2 border-[#99979a] bg-[#f2f0f3] pt-1 font-['Open_Sans',sans-serif] text-[#23222c]">
          <span className="ml-[5px]">(</span>
          <span className="ml-[22px]">18.853,</span>
          <span className="ml-[24px]">22.320)</span>
          <div className="ml-auto flex h-7 w-[879px] items-center border-t-2 border-l-2 border-[#a3a1a5] pl-[2px]">
            License expires in 162 days.
          </div>
          <label htmlFor="stroke-color" className="ml-[9px]">Stroke</label>
          <button id="stroke-color" type="button" className="ml-3 flex h-7 w-[44px] items-center justify-center border-t-2 border-l-2 border-[#a3a1a5]">
            <svg viewBox="0 0 36 20" className="h-5 w-9" fill="none" stroke="#222" strokeWidth="2">
              <path d="M1 1h34v18H1zM7 6h22v8H7z" />
            </svg>
          </button>
          <label htmlFor="fill-color" className="ml-[11px]">Fill</label>
          <button id="fill-color" type="button" className="mr-[3px] ml-3 flex h-7 w-[43px] items-center justify-center border-t-2 border-l-2 border-[#a3a1a5]">
            <span className="h-5 w-9 bg-black" />
          </button>
        </footer>
      </div>
    </div>
  );
}
